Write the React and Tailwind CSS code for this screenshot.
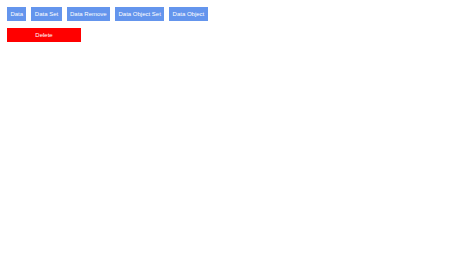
export default function App() {
  const btns = ["Data", "Data Set", "Data Remove", "Data Object Set", "Data Object"];
  return (
    <div className="w-[474px] h-[266px] bg-white p-[7px] flex flex-col gap-[7px]" style={{ fontFamily: '"Liberation Sans", Arial, sans-serif' }}>
      <div className="flex gap-[5px]">
        {btns.map((b) => (
          <button key={b} className="h-[14px] px-[3.4px] bg-[#6495ed] text-white text-[6px] leading-none flex items-center">
            {b}
          </button>
        ))}
      </div>
      <button className="w-[74px] h-[14px] bg-[#ff0000] text-white text-[6px] leading-none flex items-center justify-center">
        Delete
      </button>
    </div>
  );
}
